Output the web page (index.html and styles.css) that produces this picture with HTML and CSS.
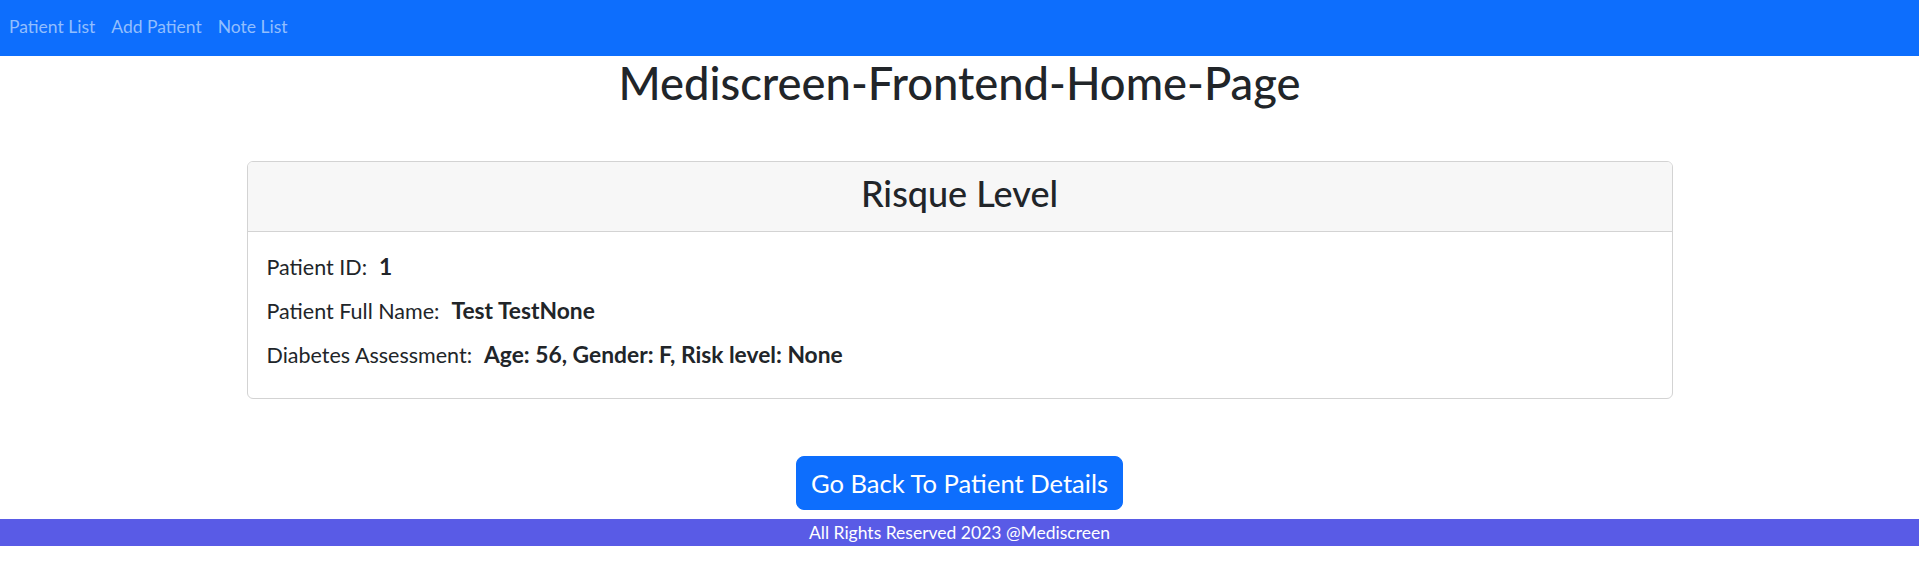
FILE: index.html
```html
<!DOCTYPE html>
<html lang="en">
<head>
<meta charset="utf-8">
<title>Mediscreen</title>
<link rel="stylesheet" href="styles.css">
</head>
<body>
<nav class="navbar">
  <ul class="nav">
    <li><a class="nav-link" href="#">Patient List</a></li>
    <li><a class="nav-link" href="#">Add Patient</a></li>
    <li><a class="nav-link" href="#">Note List</a></li>
  </ul>
</nav>
<main class="main">
  <h1 class="page-title">Mediscreen-Frontend-Home-Page</h1>
  <section class="card">
    <div class="card-header"><h2 class="card-title">Risque Level</h2></div>
    <div class="card-body">
      <p class="info"><span class="label">Patient ID:</span><strong class="value">1</strong></p>
      <p class="info"><span class="label">Patient Full Name:</span><strong class="value">Test TestNone</strong></p>
      <p class="info"><span class="label">Diabetes Assessment:</span><strong class="value">Age: 56, Gender: F, Risk level: None</strong></p>
    </div>
  </section>
  <div class="actions"><a class="btn" href="#">Go Back To Patient Details</a></div>
</main>
<footer class="footer">All Rights Reserved 2023 @Mediscreen</footer>
</body>
</html>
```
FILE: styles.css
```css
* { box-sizing: border-box; }
html, body { margin: 0; padding: 0; }
body {
  font-family: "Segoe UI", Lato, "Noto Sans", sans-serif;
  color: #212529;
  background: #fff;
}
.navbar {
  background: #0d6efd;
  height: 56px;
  display: flex;
  align-items: center;
  padding: 0 1px;
}
.nav {
  list-style: none;
  margin: 0;
  padding: 0;
  display: flex;
}
.nav-link {
  display: block;
  padding: 7px 8px 9px;
  font-size: 17.5px;
  line-height: 24px;
  color: #92befe;
  text-decoration: none;
}
.main {
  display: flex;
  flex-direction: column;
  align-items: center;
}
.page-title {
  margin: 0;
  font-size: 45.3px;
  font-weight: 500;
  line-height: 1.2;
}
.card {
  width: 1426px;
  margin-top: 51px;
  border: 1px solid #d3d3d3;
  border-radius: 6px;
  overflow: hidden;
}
.card-header {
  background: #f7f7f7;
  border-bottom: 1px solid #d3d3d3;
  padding: 9.5px 16px 16px;
  text-align: center;
}
.card-title {
  margin: 0;
  font-size: 36px;
  font-weight: 500;
  line-height: 1.2;
}
.card-body {
  padding: 20.5px 19px 13.5px;
}
.info {
  margin: 0 0 16px;
  font-size: 21.5px;
  line-height: 28px;
}
.value {
  margin-left: 12px;
  font-size: 22.8px;
  font-weight: 700;
  line-height: 1;
}
.actions {
  margin-top: 57px;
}
.btn {
  display: inline-block;
  background: #0d6efd;
  color: #fff;
  text-decoration: none;
  font-size: 25.6px;
  line-height: 52px;
  height: 54px;
  padding: 0 14px;
  border: 1px solid #0d6efd;
  border-radius: 8px;
}
.footer {
  margin-top: 9px;
  background: #595be6;
  color: #fff;
  text-align: center;
  font-size: 17.5px;
  line-height: 27px;
  height: 27px;
}
```
